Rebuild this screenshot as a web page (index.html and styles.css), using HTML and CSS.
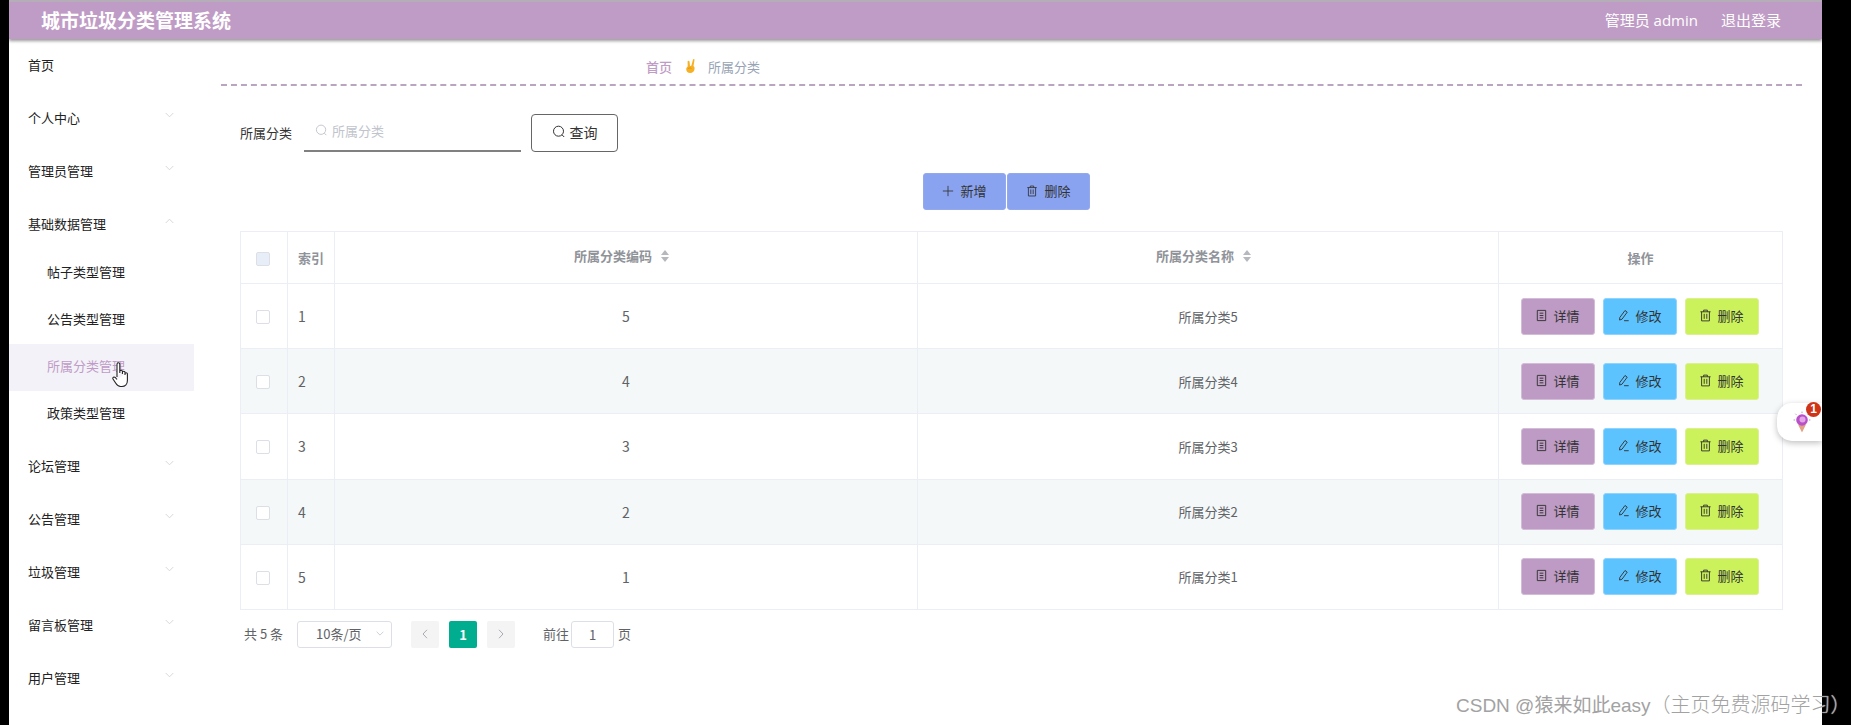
FILE: index.html
```html
<!DOCTYPE html>
<html lang="zh">
<head>
<meta charset="utf-8">
<title>城市垃圾分类管理系统</title>
<link rel="stylesheet" href="styles.css">
</head>
<body>
<svg class="defs" aria-hidden="true">
  <symbol id="i-search" viewBox="0 0 14 14"><circle cx="6.5" cy="6.2" r="5" fill="none" stroke="currentColor"/><path d="M10 9.8l2.2 2.2" fill="none" stroke="currentColor"/></symbol>
  <symbol id="i-plus" viewBox="0 0 14 14"><path d="M7 1v12M1 7h12" fill="none" stroke="currentColor"/></symbol>
  <symbol id="i-del" viewBox="0 0 14 14"><path d="M1.5 3h11M5 3V1.2h4V3M2.8 3v9.8h8.4V3M5.6 5.2v5.4M8.4 5.2v5.4" fill="none" stroke="currentColor"/></symbol>
  <symbol id="i-doc" viewBox="0 0 14 14"><path d="M2.5 1.5h9v11h-9zM5 4.5h4M5 7h4M5 9.5h4" fill="none" stroke="currentColor"/></symbol>
  <symbol id="i-edit" viewBox="0 0 14 14"><path d="M3 9.2L8.6 1.6l2.4 1.8-5.6 7.6-2.6.9zM7.6 12.6h5" fill="none" stroke="currentColor"/></symbol>
  <symbol id="i-down" viewBox="0 0 10 6"><path d="M.8.8L5 5l4.2-4.2" fill="none" stroke="currentColor"/></symbol>
  <symbol id="i-up" viewBox="0 0 10 6"><path d="M.8 5.2L5 1l4.2 4.2" fill="none" stroke="currentColor"/></symbol>
  <symbol id="i-left" viewBox="0 0 6 10"><path d="M5 .8L1 5l4 4.2" fill="none" stroke="currentColor"/></symbol>
  <symbol id="i-right" viewBox="0 0 6 10"><path d="M1 .8L5 5 1 9.200" fill="none" stroke="currentColor"/></symbol>
</svg>
<div class="app">
  <header class="topbar">
    <div class="brand">城市垃圾分类管理系统</div>
    <div class="user"><span>管理员 admin</span><span>退出登录</span></div>
  </header>
  <div class="body">
    <nav class="side">
      <div class="mi"><span>首页</span></div>
      <div class="mi"><span>个人中心</span><svg class="chev"><use href="#i-down"/></svg></div>
      <div class="mi"><span>管理员管理</span><svg class="chev"><use href="#i-down"/></svg></div>
      <div class="mi"><span>基础数据管理</span><svg class="chev"><use href="#i-up"/></svg></div>
      <div class="sub">帖子类型管理</div>
      <div class="sub">公告类型管理</div>
      <div class="sub sub-on">所属分类管理
        <svg class="hand" viewBox="0 0 17 28"><path d="M5 16V3.2a1.4 1.4 0 0 1 2.8 0V12m0-1.500a1.300 1.300 0 0 1 2.600 0V13m0-1.500a1.300 1.300 0 0 1 2.600 0V14m0-1a1.200 1.200 0 0 1 2.400 0v6.500c0 3.500-2.200 6-5.500 6H8.500c-2.300 0-3.500-1.200-4.700-3.200L1 18c-.7-1.500 1-2.700 2.200-1.500L5 18.500" fill="#fff" stroke="#222" stroke-width="1.100"/></svg>
      </div>
      <div class="sub">政策类型管理</div>
      <div class="mi"><span>论坛管理</span><svg class="chev"><use href="#i-down"/></svg></div>
      <div class="mi"><span>公告管理</span><svg class="chev"><use href="#i-down"/></svg></div>
      <div class="mi"><span>垃圾管理</span><svg class="chev"><use href="#i-down"/></svg></div>
      <div class="mi"><span>留言板管理</span><svg class="chev"><use href="#i-down"/></svg></div>
      <div class="mi"><span>用户管理</span><svg class="chev"><use href="#i-down"/></svg></div>
    </nav>
    <main class="main">
      <div class="crumb">
        <span class="crumb-home">首页</span>
        <svg class="peace" viewBox="0 0 12 16"><path d="M5.500 3.500L6 8l1.300-.2L9 1.500c.4-1 1.600-.6 1.500.4L9.500 8c1 .8 1.300 1.700 1 3.200-.5 2.600-2 3.800-4.300 3.800-2.400 0-4-1.500-4-3.700 0-1.300.6-2.300 1.500-2.900L3.600 3.500c0-1.100 1.800-1.100 1.900 0z" fill="#f6b024"/><path d="M3.800 10.800c1-1 2.500-1.100 3.700-.3" fill="none" stroke="#d98a16" stroke-width=".8"/></svg>
        <span class="crumb-cur">所属分类</span>
      </div>
      <div class="content">
        <form class="search">
          <label class="search-label">所属分类</label>
          <div class="search-input"><svg class="ic"><use href="#i-search"/></svg><span>所属分类</span></div>
          <button type="button" class="search-btn"><svg class="ic"><use href="#i-search"/></svg>查询</button>
        </form>
        <div class="actions">
          <button type="button" class="act"><svg class="ic"><use href="#i-plus"/></svg>新增</button>
          <button type="button" class="act"><svg class="ic"><use href="#i-del"/></svg>删除</button>
        </div>
        <table class="grid">
          <thead>
            <tr>
              <th class="c-check"><i class="box box-head"></i></th>
              <th class="c-idx">索引</th>
              <th class="c-code">所属分类编码<i class="sort"></i></th>
              <th class="c-name">所属分类名称<i class="sort"></i></th>
              <th class="c-op">操作</th>
            </tr>
          </thead>
          <tbody>
            <tr>
              <td class="chk"><i class="box"></i></td><td class="idx">1</td><td class="mid num">5</td><td class="mid">所属分类5</td>
              <td class="ops"><div class="op-row"><button type="button" class="op op-a"><svg class="ic"><use href="#i-doc"/></svg>详情</button><button type="button" class="op op-b"><svg class="ic"><use href="#i-edit"/></svg>修改</button><button type="button" class="op op-c"><svg class="ic"><use href="#i-del"/></svg>删除</button></div></td>
            </tr>
            <tr>
              <td class="chk"><i class="box"></i></td><td class="idx">2</td><td class="mid num">4</td><td class="mid">所属分类4</td>
              <td class="ops"><div class="op-row"><button type="button" class="op op-a"><svg class="ic"><use href="#i-doc"/></svg>详情</button><button type="button" class="op op-b"><svg class="ic"><use href="#i-edit"/></svg>修改</button><button type="button" class="op op-c"><svg class="ic"><use href="#i-del"/></svg>删除</button></div></td>
            </tr>
            <tr>
              <td class="chk"><i class="box"></i></td><td class="idx">3</td><td class="mid num">3</td><td class="mid">所属分类3</td>
              <td class="ops"><div class="op-row"><button type="button" class="op op-a"><svg class="ic"><use href="#i-doc"/></svg>详情</button><button type="button" class="op op-b"><svg class="ic"><use href="#i-edit"/></svg>修改</button><button type="button" class="op op-c"><svg class="ic"><use href="#i-del"/></svg>删除</button></div></td>
            </tr>
            <tr>
              <td class="chk"><i class="box"></i></td><td class="idx">4</td><td class="mid num">2</td><td class="mid">所属分类2</td>
              <td class="ops"><div class="op-row"><button type="button" class="op op-a"><svg class="ic"><use href="#i-doc"/></svg>详情</button><button type="button" class="op op-b"><svg class="ic"><use href="#i-edit"/></svg>修改</button><button type="button" class="op op-c"><svg class="ic"><use href="#i-del"/></svg>删除</button></div></td>
            </tr>
            <tr>
              <td class="chk"><i class="box"></i></td><td class="idx">5</td><td class="mid num">1</td><td class="mid">所属分类1</td>
              <td class="ops"><div class="op-row"><button type="button" class="op op-a"><svg class="ic"><use href="#i-doc"/></svg>详情</button><button type="button" class="op op-b"><svg class="ic"><use href="#i-edit"/></svg>修改</button><button type="button" class="op op-c"><svg class="ic"><use href="#i-del"/></svg>删除</button></div></td>
            </tr>
          </tbody>
        </table>
        <div class="pager">
          <span class="total">共 5 条</span>
          <div class="size"><span>10条/页</span><svg class="size-chev"><use href="#i-down"/></svg></div>
          <div class="pg pg-off"><svg class="pg-ic"><use href="#i-left"/></svg></div>
          <div class="pg pg-on">1</div>
          <div class="pg pg-off"><svg class="pg-ic"><use href="#i-right"/></svg></div>
          <span class="goto">前往</span>
          <div class="goto-box">1</div>
          <span>页</span>
        </div>
      </div>
    </main>
  </div>
  <div class="float">
    <svg class="bulb" viewBox="0 0 18 22"><path d="M5 13.500L9 21.500l4-8z" fill="#e2a184"/><circle cx="9" cy="9" r="5.800" fill="#b94fc9"/><circle cx="9.500" cy="8.500" r="3" fill="#e3a6e6"/><path d="M9 .6v1.500M2.400 2.800l1 1M15.600 2.800l-1 1M.6 9h1.400M16 9h1.400" stroke="#c98bd6" fill="none"/></svg>
    <b class="badge">1</b>
  </div>
</div>
<div class="mark">CSDN @猿来如此easy<span class="mark-tail">（主页免费源码学习）</span></div>
</body>
</html>
```

FILE: styles.css
```css
* { box-sizing: border-box; }
html, body { margin: 0; height: 725px; overflow: hidden; background: #000; }
body {
  padding-left: 9px;
  font-family: "Noto Sans CJK SC", "Open Sans", sans-serif;
  font-size: 13px;
  color: #333;
  position: relative;
}
.defs { display: none; }
.app {
  position: relative;
  width: 1813px;
  height: 725px;
  background: #fff;
  overflow: hidden;
}
.topbar {
  position: relative;
  z-index: 2;
  height: 39px;
  background: #bf9cc6;
  border-top: 2px solid #b5adb8;
  box-shadow: 0 2px 3px rgba(70, 70, 70, .55);
  display: flex;
  align-items: center;
  justify-content: space-between;
  padding: 0 41px 2px 32px;
  color: #fff;
}
.brand { font-size: 19px; font-weight: 700; }
.user { display: flex; gap: 23px; font-size: 15px; font-family: "Open Sans", "Noto Sans CJK SC", sans-serif; }
.body { display: flex; height: 686px; }
.side {
  width: 185px;
  flex: none;
  margin-top: -1.500px;
  color: #222;
}
.mi {
  height: 53px;
  display: flex;
  align-items: center;
  justify-content: space-between;
  padding: 0 20px 0 19px;
  font-size: 13px;
}
.chev { width: 9px; height: 6px; color: #d2d2d2; margin-top: -5px; }
.sub {
  position: relative;
  height: 47.250px;
  line-height: 44px;
  padding-left: 38px;
}
.sub-on { background: #f4f2f9; color: #bf9cc6; }
.hand { position: absolute; left: 103px; top: 17px; width: 17px; height: 28px; }
.main { flex: 1; min-width: 0; }
.crumb {
  margin-left: 27px;
  width: 1581px;
  height: 47px;
  padding: 9px 0 0 425px;
  border-bottom: 2px dashed #b9a5bf;
  display: flex;
  align-items: center;
  gap: 10px;
}
.crumb-home { color: #bf9cc6; font-weight: 500; }
.crumb-cur { color: #97a3b4; }
.peace { width: 12px; height: 16px; margin: 0 2px; }
.content { padding: 28px 40px 0 46px; }
.ic { width: 14px; height: 14px; flex: none; }
.search { display: flex; align-items: center; height: 38px; }
.search-label { width: 64px; padding-bottom: 2px; }
.search-input {
  width: 217px;
  height: 38px;
  padding: 0 11px 3px;
  border-bottom: 2px solid #808080;
  display: flex;
  align-items: center;
  gap: 4px;
  color: #c0c4cc;
}
.search-input .ic { width: 13px; height: 13px; }
.search-btn {
  margin-left: 10px;
  width: 87px;
  height: 38px;
  background: #fff;
  border: 1px solid #666;
  border-radius: 4px;
  display: flex;
  align-items: center;
  justify-content: center;
  gap: 4px;
  font: inherit;
  font-size: 14px;
  color: #333;
  padding: 0 0 2px;
}
.actions {
  display: flex;
  justify-content: center;
  gap: 1px;
  padding-right: 9px;
  margin-top: 21px;
  height: 37px;
}
.act {
  width: 83px;
  background: #8aa3f0;
  border: 1px solid #92a9ee;
  border-radius: 3px;
  display: flex;
  align-items: center;
  justify-content: center;
  gap: 6px;
  font: inherit;
  color: #333;
  padding: 0 0 2px;
}
.act .ic { width: 12px; height: 12px; }
.grid {
  margin-top: 21px;
  width: 1543px;
  height: 378px;
  border-collapse: collapse;
  table-layout: fixed;
}
.grid th, .grid td { border: 1px solid #ebeef5; padding: 0; }
.grid th { height: 52px; color: #909399; font-weight: 700; font-size: 13px; text-align: center; }
.grid td { height: 65.200px; color: #606266; text-align: center; }
.grid tbody tr:nth-child(even) td { background: #f4f8f9; }
.c-check { width: 47px; }
.c-idx { width: 47px; }
.grid th.c-idx { text-align: left; padding-left: 10px; }
.c-code { width: 583px; }
.c-name { width: 581px; }
.grid th.c-code, .grid th.c-name { padding: 0 9px 4px 0; }
.grid th.c-check { padding-right: 2px; }
.grid td.chk { padding: 0 2px 2px 0; }
.grid td.idx { text-align: left; padding-left: 10px; font-size: 14px; }
.grid td.num { font-size: 14px; }
.box {
  display: inline-block;
  width: 14px;
  height: 14px;
  vertical-align: middle;
  border: 1px solid #dcdfe6;
  border-radius: 2px;
  background: #fff;
}
.box-head { background: #e8eef8; }
.sort {
  display: inline-block;
  position: relative;
  width: 8px;
  height: 12px;
  margin-left: 9px;
  vertical-align: -1px;
}
.sort::before, .sort::after {
  content: "";
  position: absolute;
  left: 0;
  border-left: 4px solid transparent;
  border-right: 4px solid transparent;
}
.sort::before { top: 0; border-bottom: 5px solid #b5b8be; }
.sort::after { bottom: 0; border-top: 5px solid #b5b8be; }
.op-row { display: flex; justify-content: center; gap: 8px; padding-right: 2px; }
.op {
  width: 74px;
  height: 37px;
  border-radius: 3px;
  display: flex;
  align-items: center;
  justify-content: center;
  gap: 5px;
  font: inherit;
  color: #333;
  padding: 0 0 2px;
}
.op .ic { width: 13px; height: 13px; }
.op-a { background: #bd9bc4; border: 1px solid #d3bcd8; }
.op-b { background: #5cc3ff; border: 1px solid #8dd4ff; }
.op-c { background: #ccf25b; border: 1px solid #dcf08f; }
.pager { display: flex; align-items: center; height: 27px; margin-top: 11px; color: #606266; }
.total { margin-left: 4px; width: 53px; padding-bottom: 2px; }
.size {
  width: 95px;
  height: 27px;
  border: 1px solid #dcdfe6;
  border-radius: 3px;
  display: flex;
  align-items: center;
  justify-content: space-between;
  padding: 0 7px 2px 18px;
}
.size-chev { width: 8px; height: 5px; color: #c0c4cc; }
.pg {
  width: 28px;
  height: 27px;
  border-radius: 2px;
  display: flex;
  align-items: center;
  justify-content: center;
  margin-left: 10px;
}
.size + .pg { margin-left: 19px; }
.pg-off { background: #f4f4f5; color: #a8abb2; }
.pg-ic { width: 6px; height: 10px; }
.pg-on { background: #00ad8f; color: #fff; font-weight: 700; }
.goto { margin-left: 28px; padding-bottom: 2px; }
.goto-box {
  width: 43px;
  height: 27px;
  margin: 0 4px 0 2px;
  border: 1px solid #dcdfe6;
  border-radius: 3px;
  display: flex;
  align-items: center;
  justify-content: center;
}
.pager > span:last-child { padding-bottom: 2px; }
.float {
  position: absolute;
  right: 0;
  top: 403px;
  width: 45px;
  height: 38px;
  background: #fff;
  border-radius: 15px 0 0 15px;
  box-shadow: 0 2px 6px rgba(0, 0, 0, .25);
}
.bulb { position: absolute; left: 16px; top: 8px; width: 18px; height: 22px; }
.badge {
  position: absolute;
  right: 1px;
  top: -1px;
  width: 15px;
  height: 15px;
  border-radius: 50%;
  background: #cf3418;
  color: #fff;
  font-size: 12px;
  line-height: 15px;
  text-align: center;
  font-family: "Liberation Sans", sans-serif;
}
.mark {
  position: absolute;
  left: 1456px;
  top: 691px;
  font-family: "Liberation Sans", "Noto Sans CJK SC", sans-serif;
  font-size: 19px;
  line-height: 26px;
  white-space: nowrap;
  color: #a2a2a2;
  text-shadow: 0 0 1px #fff;
}
.mark-tail { font-size: 20px; font-family: "Noto Sans CJK SC", sans-serif; font-weight: 300; }
```
